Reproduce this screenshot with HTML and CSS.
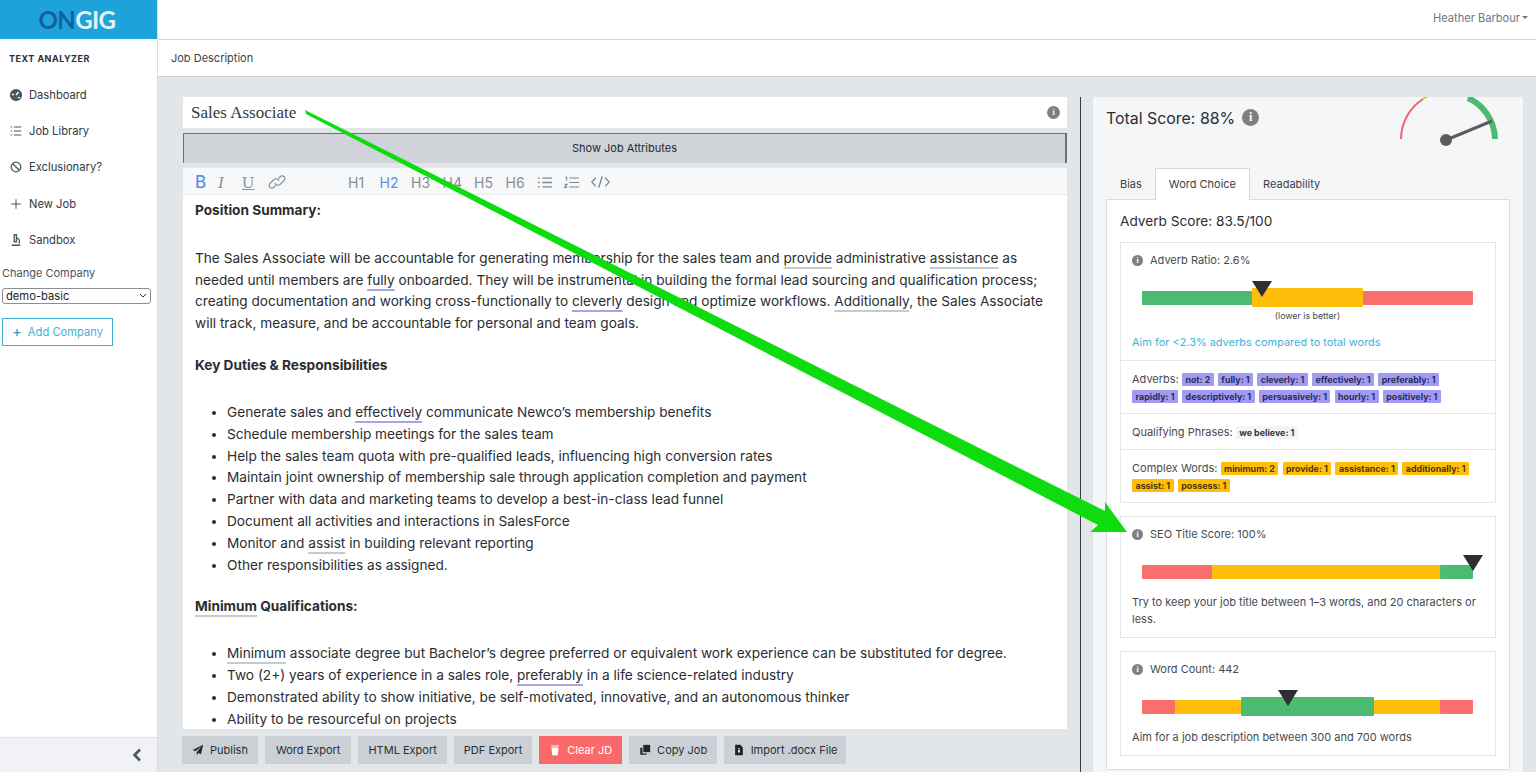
FILE: index.html
```html
<!DOCTYPE html>
<html lang="en">
<head>
<meta charset="utf-8">
<title>Ongig Text Analyzer</title>
<link rel="stylesheet" href="styles.css">
</head>
<body>
<div class="app">
  <aside class="side">
    <div class="logo"><span class="on">ON</span><span class="gig">GIG</span></div>
    <div class="side-title">TEXT ANALYZER</div>
    <nav class="nav">
      <a class="nav-item"><svg class="nav-ic" viewBox="0 0 16 16"><circle cx="8" cy="8" r="7" fill="#495867"/><path d="M8 8 11 4.500M3.500 7.500h2M10 11h2.500" stroke="#fff" stroke-width="1.600" fill="none"/></svg>Dashboard</a>
      <a class="nav-item"><svg class="nav-ic" viewBox="0 0 16 16"><path d="M5.500 3.500H14M5.500 8H14M5.500 12.500H14M2 3.500h1.500M2 8h1.500M2 12.500h1.500" stroke="#495867" stroke-width="1.200" fill="none"/></svg>Job Library</a>
      <a class="nav-item"><svg class="nav-ic" viewBox="0 0 16 16"><circle cx="8" cy="8" r="5.500" stroke="#495867" stroke-width="1.500" fill="none"/><path d="M4.200 4.200 11.800 11.800" stroke="#495867" stroke-width="1.500"/></svg>Exclusionary?</a>
      <a class="nav-item"><svg class="nav-ic" viewBox="0 0 16 16"><path d="M8 2.500v11M2.500 8h11" stroke="#495867" stroke-width="1.200"/></svg>New Job</a>
      <a class="nav-item"><svg class="nav-ic" viewBox="0 0 16 16"><path d="M6 2h2.500v8H6zM8.500 5.500c3 .5 4 3.500 3 6.500M3 14h10" stroke="#495867" stroke-width="1.500" fill="none"/></svg>Sandbox</a>
    </nav>
    <div class="change">Change Company</div>
    <select class="company"><option>demo-basic</option></select>
    <button class="add"><span class="plus">+</span>Add Company</button>
    <div class="collapse"><svg viewBox="0 0 10 14" class="chev"><path d="M8 1.500 2.500 7 8 12.500" stroke="#495867" stroke-width="2.600" fill="none"/></svg></div>
  </aside>
  <div class="main">
    <header class="top"><span class="user">Heather Barbour</span><span class="caret"></span></header>
    <div class="crumb">Job Description</div>
    <div class="work">
      <section class="editor">
        <div class="title-row"><span class="title">Sales Associate</span><span class="info info-t">i</span></div>
        <div class="attrs">Show Job Attributes</div>
        <div class="toolbar">
          <span class="tb tb-b">B</span><span class="tb tb-i">I</span><span class="tb tb-u">U</span>
          <svg class="tb-link" viewBox="0 0 18 14"><path d="M7.500 10.500 5 13c-3 1-5-2-3-4.500l4-4c2-1.500 4.500-.5 5 1.500M10.500 3.500 13 1c3-1 5 2 3 4.500l-4 4c-2 1.500-4.500.5-5-1.500" stroke="#8a929a" stroke-width="1.200" fill="none"/></svg>
          <span class="heads"><span>H1</span><span class="act">H2</span><span>H3</span><span>H4</span><span>H5</span><span>H6</span></span>
          <svg class="tb-ic" viewBox="0 0 18 14"><path d="M6 2h11M6 7h11M6 12h11M1 2h2M1 7h2M1 12h2" stroke="#7d858d" stroke-width="1.500"/></svg>
          <svg class="tb-ic" viewBox="0 0 18 14"><path d="M6 2h11M6 7h11M6 12h11M1.500 1h1.500v4M.5 9h3l-3 3.500h3" stroke="#7d858d" stroke-width="1.200" fill="none"/></svg>
          <svg class="tb-code" viewBox="0 0 20 14"><path d="M5 2.500.8 7 5 11.500M15 2.500 19.200 7 15 11.500M11.800 1 8.200 13" stroke="#7d858d" stroke-width="1.300" fill="none"/></svg>
        </div>
        <div class="doc">
          <p class="h"><b>Position Summary:</b></p>
          <p class="para">The Sales Associate will be accountable for generating membership for the sales team and <u class="g">provide</u> administrative <u class="g">assistance</u> as needed until members are <u class="p">fully</u> onboarded. They will be instrumental in building the formal lead sourcing and qualification process; creating documentation and working cross-functionally to <u class="p">cleverly</u> design and optimize workflows. <u class="g">Additionally</u>, the Sales Associate will track, measure, and be accountable for personal and team goals.</p>
          <p class="h2"><b>Key Duties &amp; Responsibilities</b></p>
          <ul class="list">
            <li>Generate sales and <u class="p">effectively</u> communicate Newco’s membership benefits</li>
            <li>Schedule membership meetings for the sales team</li>
            <li>Help the sales team quota with pre-qualified leads, influencing high conversion rates</li>
            <li>Maintain joint ownership of membership sale through application completion and payment</li>
            <li>Partner with data and marketing teams to develop a best-in-class lead funnel</li>
            <li>Document all activities and interactions in SalesForce</li>
            <li>Monitor and <u class="g">assist</u> in building relevant reporting</li>
            <li>Other responsibilities as assigned.</li>
          </ul>
          <p class="h3"><b><u class="g">Minimum</u> Qualifications:</b></p>
          <ul class="list list2">
            <li><u class="g">Minimum</u> associate degree but Bachelor’s degree preferred or equivalent work experience can be substituted for degree.</li>
            <li>Two (2+) years of experience in a sales role, <u class="p">preferably</u> in a life science-related industry</li>
            <li>Demonstrated ability to show initiative, be self-motivated, innovative, and an autonomous thinker</li>
            <li>Ability to be resourceful on projects</li>
          </ul>
        </div>
        <div class="actions">
          <button class="btn"><svg class="bi" viewBox="0 0 14 14"><path d="M13 1 1 7l3 1.500L11 3 5.500 9.500V13l2-2.500 3 1.500z" fill="#212529"/></svg>Publish</button>
          <button class="btn btn-wide">Word Export</button>
          <button class="btn">HTML Export</button>
          <button class="btn">PDF Export</button>
          <button class="btn danger"><svg class="bi" viewBox="0 0 14 14"><path d="M3 4h8l-.7 9H3.700zM2.500 1.800h9V3h-9z" fill="#fff"/></svg>Clear JD</button>
          <button class="btn"><svg class="bi" viewBox="0 0 14 14"><path d="M5 1h8v8.500H5z" fill="#212529"/><path d="M1.500 4.500H4V11h5v1.500H1.500z" fill="#212529"/></svg>Copy Job</button>
          <button class="btn btn-tight"><svg class="bi" viewBox="0 0 14 14"><path d="M2.500 1H8.500L11.500 4V13h-9z" fill="#212529"/><path d="M6 5h2v1H6zM6 7h2v3H6z" fill="#fff"/></svg>Import .docx File</button>
        </div>
      </section>
      <div class="vline"></div>
      <section class="panel">
        <div class="score-row">
          <h2 class="total">Total Score: 88%</h2><span class="info info-l">i</span>
          <svg class="gauge" viewBox="0 0 104 60"><path d="M2 42A48 48 0 0 1 24 2" stroke="#f0616d" stroke-width="2" fill="none"/><path d="M24 2A48 48 0 0 1 34 -3" stroke="#f5c518" stroke-width="2" fill="none"/><path d="M60 -3A48 48 0 0 1 72 1" stroke="#f5c518" stroke-width="2" fill="none"/><path d="M69 1A46 46 0 0 1 96 42" stroke="#4cbb71" stroke-width="6" fill="none"/><path d="M47 43 93 24" stroke="#5c5c5c" stroke-width="3"/><circle cx="47" cy="43" r="6" fill="#5c5c5c"/></svg>
        </div>
        <div class="tabs"><span class="tab">Bias</span><span class="tab on-tab">Word Choice</span><span class="tab">Readability</span></div>
        <div class="tabbody">
          <h3 class="adv">Adverb Score: 83.5/100</h3>
          <div class="card">
            <div class="cell">
              <div class="lab"><span class="info">i</span>Adverb Ratio: 2.6%</div>
              <div class="bar bar1"><i class="s green g1"></i><i class="s amber big g1"></i><i class="s red g1"></i><span class="mark m1"></span></div>
              <div class="lower">(lower is better)</div>
              <div class="aim">Aim for &lt;2.3% adverbs compared to total words</div>
            </div>
            <div class="cell tags">Adverbs: <span class="t pu">not: 2</span> <span class="t pu">fully: 1</span> <span class="t pu">cleverly: 1</span> <span class="t pu">effectively: 1</span> <span class="t pu">preferably: 1</span> <span class="t pu">rapidly: 1</span> <span class="t pu">descriptively: 1</span> <span class="t pu">persuasively: 1</span> <span class="t pu">hourly: 1</span> <span class="t pu">positively: 1</span></div>
            <div class="cell tags">Qualifying Phrases: <span class="t gr">we believe: 1</span></div>
            <div class="cell tags">Complex Words: <span class="t am">minimum: 2</span> <span class="t am">provide: 1</span> <span class="t am">assistance: 1</span> <span class="t am">additionally: 1</span> <span class="t am">assist: 1</span> <span class="t am">possess: 1</span></div>
          </div>
          <div class="card">
            <div class="cell">
              <div class="lab"><span class="info">i</span>SEO Title Score: 100%</div>
              <div class="bar bar2"><i class="s red w21"></i><i class="s amber w69"></i><i class="s green w10"></i><span class="mark m2"></span></div>
              <div class="note">Try to keep your job title between 1–3 words, and 20 characters or less.</div>
            </div>
          </div>
          <div class="card">
            <div class="cell">
              <div class="lab"><span class="info">i</span>Word Count: 442</div>
              <div class="bar bar3"><i class="s red w10"></i><i class="s amber w20"></i><i class="s green big w40"></i><i class="s amber w20"></i><i class="s red w10"></i><span class="mark m3"></span></div>
              <div class="note note3">Aim for a job description between 300 and 700 words</div>
            </div>
          </div>
        </div>
      </section>
    </div>
  </div>
</div>
<svg class="arrow" viewBox="0 0 1536 772"><polygon points="305,110 1105,511 1105,502 1127,532 1090,532 1098,525 306,114" fill="#0fdc0f"/></svg>
</body>
</html>
```
FILE: styles.css
```css
* { box-sizing: border-box; }
html, body { margin: 0; height: 772px; overflow: hidden; }
body { font-family: Inter, "Liberation Sans", sans-serif; color: #212529; background: #fff; position: relative; }
.app { display: flex; height: 772px; }
.side { width: 158px; flex: none; display: flex; flex-direction: column; border-right: 1px solid #d5e0e6; position: relative; }
.logo { height: 39px; background: #1da3da; display: flex; justify-content: center; align-items: center; font: 700 24px/1 Lato, sans-serif; letter-spacing: -.6px; padding-right: 3px; }
.on { color: #11619f; }
.gig { color: #e4f3fa; }
.side-title { font-size: 9px; font-weight: 700; letter-spacing: .5px; padding: 14px 0 0 9px; height: 37px; color: #2a2f33; }
.nav { display: flex; flex-direction: column; }
.nav-item { height: 36.400px; display: flex; align-items: center; font-size: 11.200px; padding: 1px 0 0 9px; color: #2f3a44; }
.nav-ic { width: 14px; height: 14px; margin-right: 6px; flex: none; }
.change { font-size: 11px; color: #4a5560; padding: 5px 0 0 2px; height: 23px; margin-top: 3px; }
.company { margin: 4px 0 0 2px; width: 149px; height: 16px; font: 11.200px Inter, sans-serif; color: #212529; background: #fff url("data:image/svg+xml,%3Csvg xmlns='http://www.w3.org/2000/svg' viewBox='0 0 8 5'%3E%3Cpath d='M1 1l3 3 3-3' stroke='%23333' fill='none'/%3E%3C/svg%3E") no-repeat right 3px center / 8px 5px; border: 1px solid #8a8f94; border-radius: 3px; padding: 0 0 0 3px; appearance: none; }
.add { margin: 14px 0 0 2px; width: 111px; height: 28px; border: 1px solid #3fb0d8; background: #fff; color: #45b1d6; font: 11.200px Inter, sans-serif; padding: 0; }
.plus { font-size: 15px; margin-right: 6px; line-height: 1; vertical-align: -1px; color: #2a9cc9; }
.collapse { position: absolute; left: 0; right: 0; bottom: 0; height: 35px; background: #f0f2f5; border-top: 1px solid #dfe3e6; display: flex; justify-content: flex-end; align-items: center; padding-right: 15px; }
.chev { width: 10px; height: 14px; }
.main { flex: 1; min-width: 0; display: flex; flex-direction: column; background: #e3e6e9; }
.top { height: 40px; background: #fff; border-bottom: 1px solid #c9d9e0; display: flex; justify-content: flex-end; align-items: flex-start; padding: 11px 8px 0 0; font-size: 11.100px; color: #6c7780; }
.caret { width: 0; height: 0; border: 3.500px solid transparent; border-top-color: #6c7780; margin: 5px 0 0 2px; }
.crumb { height: 37px; background: #fff; border-bottom: 1px solid #ccd2d7; font-size: 11px; padding: 11px 0 0 13px; color: #3a4249; }
.work { flex: 1; min-height: 0; display: flex; align-items: stretch; padding-left: 25px; }
.editor { width: 884px; flex: none; padding-top: 20px; display: flex; flex-direction: column; min-height: 0; }
.title-row { height: 31px; background: #fff; display: flex; align-items: center; justify-content: space-between; padding: 0 7px 0 8px; }
.title { font: 17px "Liberation Serif", serif; color: #33383c; }
.info { display: inline-flex; width: 11px; height: 11px; border-radius: 50%; background: #7f7f7f; color: #fff; font: 700 8px/11px "Liberation Serif", serif; justify-content: center; flex: none; }
.info-t { width: 13px; height: 13px; line-height: 13px; }
.attrs { height: 30px; margin-top: 5px; background: #d0d3d8; border: 1px solid #6f7275; border-width: 1px 2px 0 1px; font-size: 11px; text-align: center; line-height: 28px; color: #24292d; }
.toolbar { height: 27px; margin-top: 5px; padding: 2px 0 0 12px; background: #f7f8f9; border-bottom: 1px solid #e6e8ea; display: flex; align-items: center; color: #8a929a; }
.tb { font-size: 17px; line-height: 1; }
.tb-b { color: #5c90e8; font-weight: 500; width: 23px; }
.tb-i { font-family: "Liberation Serif", serif; font-style: italic; width: 24px; }
.tb-u { text-decoration: underline; font-family: "Liberation Serif", serif; width: 26px; }
.tb-link { width: 18px; height: 14px; }
.heads { display: flex; gap: 13.500px; margin-left: 62px; font-size: 14px; color: #878f97; }
.heads span { width: 18px; }
.act { color: #5c90e8; }
.tb-ic { width: 16px; height: 13px; margin-left: 13px; }
.tb-ic + .tb-ic { margin-left: 11px; }
.tb-code { width: 19px; height: 14px; margin-left: 11px; }
.doc { flex: 1; min-height: 0; background: #fff; overflow: hidden; padding: 5px 12px 0; font-size: 13.650px; line-height: 21.800px; color: #2a2e32; }
.doc p { margin: 0; }
.doc .para { margin-top: 26px; }
.doc .h2 { margin-top: 20px; }
.doc .h3 { margin-top: 19px; }
.list { margin: 25px 0 0; padding: 0 0 0 32px; }
.list2 { margin-top: 26px; }
.list li { height: 21.860px; }
u.g, u.p { text-decoration: underline 2px #c7cbcf; text-underline-offset: 4px; text-decoration-skip-ink: none; }
u.p { text-decoration-color: #a9a4ea; }
.actions { height: 43px; flex: none; display: flex; gap: 7px; padding-top: 7px; margin-left: -1px; }
.btn { height: 28px; border: 0; background: #cbd0d6; font: 11px Inter, sans-serif; color: #2a2e32; padding: 0 10px; display: flex; align-items: center; }
.btn-wide { padding: 0 11px; }
.btn-tight { padding: 0 8.500px; }
.bi { width: 12px; height: 12px; margin-right: 6px; }
.danger { background: #fb6a6a; color: #fff; }
.vline { width: 1px; background: #3c3f42; margin-left: 13px; margin-top: 20px; flex: none; }
.panel { width: 430px; flex: none; margin: 20px 0 0 12px; background: #f5f6f7; padding: 0 13px; overflow: hidden; }
.score-row { height: 63px; position: relative; display: flex; align-items: flex-start; padding-top: 11px; }
.total { margin: 0; font-size: 15.900px; font-weight: 400; line-height: 21px; color: #2a2e32; }
.info-l { width: 17px; height: 17px; font-size: 12px; line-height: 17px; margin: 1px 0 0 7px; }
.gauge { position: absolute; left: 293px; top: 0; width: 104px; height: 60px; }
.tabs { display: flex; height: 31px; margin-top: 8px; font-size: 11px; padding-left: 1px; color: #3a4249; position: relative; z-index: 1; }
.tab { padding: 0 13px; line-height: 32px; height: 31px; }
.on-tab { background: #fff; border: 1px solid #d4dade; border-bottom: 0; height: 32px; line-height: 30px; padding: 0 13px; }
.tabbody { width: 404px; background: #fff; border: 1px solid #d9dde0; padding: 12px 13px 0; height: 571px; }
.adv { margin: 0 0 11px; font-size: 13.650px; font-weight: 400; line-height: 19px; color: #2a2e32; }
.card { border: 1px solid #e4e7ea; margin-bottom: 13px; }
.cell { padding: 11px 12px 0 11px; border-bottom: 1px solid #e4e7ea; font-size: 11px; line-height: 16px; color: #454b50; }
.cell:last-child { border-bottom: 0; }
.lab { display: flex; align-items: center; gap: 7px; line-height: 13px; }
.bar { display: flex; align-items: center; position: relative; margin: 21px 10px 0 10px; height: 19px; }
.s { display: block; height: 14px; border-radius: 1px; }
.big { height: 19px; }
.green { background: #4cbb72; }
.amber { background: #ffbe0b; }
.red { background: #fb6e6e; }
.g1 { width: 33.333%; }
.w10 { width: 10%; }
.w20 { width: 20%; }
.w21 { width: 21%; }
.w40 { width: 40%; }
.w69 { width: 69%; }
.mark { position: absolute; top: -7px; width: 0; height: 0; border: 10px solid transparent; border-top: 16px solid #2c2e30; border-bottom: 0; }
.m1 { left: 110px; }
.m2 { left: 321px; }
.m3 { left: 136px; }
.lower { font-size: 8.800px; line-height: 12px; text-align: center; margin-top: 3px; }
.aim { color: #45b1d6; font-size: 10.950px; margin-top: 12px; padding-bottom: 10px; line-height: 16px; }
.tags { padding: 10px 12px 8px 11px; line-height: 17px; font-size: 11px; }
.t { display: inline-block; padding: 0 3.500px; font-size: 8.900px; font-weight: 700; line-height: 13px; color: #2b2c5a; border-radius: 1px; margin-right: 1px; }
.pu { background: #a19cf2; }
.gr { background: #f2f4f6; color: #33383c; }
.am { background: #ffbe0b; color: #4a3a08; }
.note { font-size: 11px; line-height: 17px; margin-top: 13px; padding-bottom: 9px; }
.arrow { position: absolute; inset: 0; width: 1536px; height: 772px; pointer-events: none; }
```
